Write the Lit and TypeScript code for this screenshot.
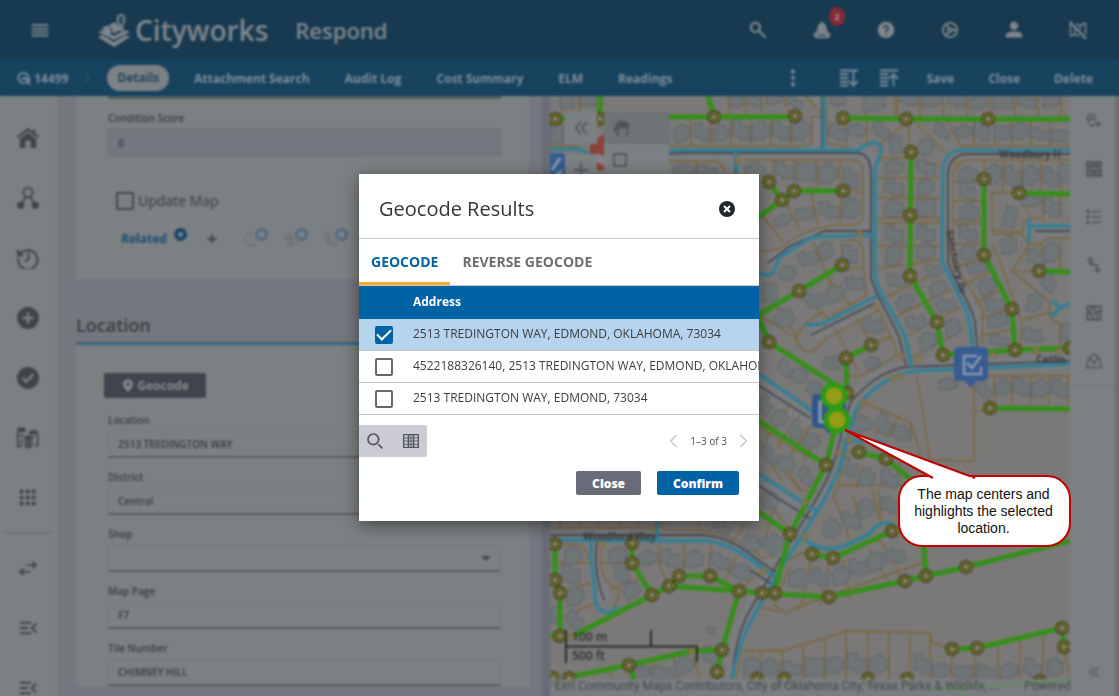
import { LitElement, html, svg, css } from "lit";
import { customElement, state } from "lit/decorators.js";

type Pt = [number, number];

const SEWERS = [
  "550,119 576,119", "600,96 600,119", "708,96 714,117", "660,117 795,117", "843,118 906,119 1070,119",
  "911,152 910,276 937,322 943,355 1015,350 1070,348", "984,179 984,255 1012,309 1015,350",
  "1019,193 1070,194", "1039,271 1070,272", "769,182 782,200 750,223", "794,191 843,191", "782,200 794,191",
  "842,265 799,291 750,320", "750,300 769,342 834,384 847,392 846,358 871,345", "834,396 837,420 826,465 790,534 774,593",
  "750,415 826,465", "750,506 790,534", "859,452 886,459 915,483 924,548 926,576",
  "892,531 833,558 812,554", "990,408 1070,409", "762,593 829,597 905,581 926,576 966,567 1070,541",
  "952,649 977,648 1062,628 1064,647", "555,544 555,580 560,593 560,636 550,635", "632,543 632,563 652,595",
  "571,637 652,595 669,586 679,576 710,576 739,591 762,593", "669,586 739,591 722,650 717,672",
  "722,650 692,651 629,665 569,677", "629,665 635,682",
];

const MANHOLES: Pt[] = [
  [555, 119], [600, 119], [714, 117], [795, 116], [843, 118], [906, 119], [988, 119], [911, 152], [910, 215],
  [910, 276], [937, 322], [943, 355], [984, 179], [984, 255], [1012, 309], [1015, 350], [1019, 193], [1039, 271],
  [769, 182], [782, 200], [794, 191], [843, 191], [842, 265], [799, 291], [769, 342], [871, 345], [846, 358],
  [847, 393], [826, 465], [790, 534], [775, 593], [762, 593], [829, 597], [905, 581], [926, 576], [966, 567],
  [859, 452], [886, 459], [892, 531], [833, 558], [812, 554], [990, 408], [952, 649], [977, 648], [1062, 628],
  [1064, 647], [555, 544], [555, 580], [560, 593], [560, 636], [632, 543], [632, 563], [652, 595], [669, 586],
  [679, 576], [710, 576], [739, 591], [722, 650], [717, 672], [629, 665], [553, 678], [569, 678], [757, 679],
  [784, 679], [868, 679], [907, 679], [1040, 681], [1070, 348],
];

const VALVES: Pt[] = [
  [738, 160], [860, 234], [875, 307], [901, 356], [918, 360], [993, 355], [1036, 351], [1059, 351], [893, 378],
  [900, 376], [863, 402], [839, 453], [849, 440], [805, 503], [805, 536], [763, 571], [652, 528], [602, 544],
  [571, 637], [692, 651], [957, 164],
];

const WATER = [
  "M550 149H580L590 155", "M650 152L683 150H858C872 141 880 139 881 151C880 158 875 163 875 172V275C877 292 890 305 905 337L912 368",
  "M824 90V150", "M735 150L737 180", "M1070 150H962C949 151 943 160 943 172L942 262L966 310C972 326 972 345 973 362",
  "M1070 364L915 371C890 374 870 390 858 406C848 425 847 455 832 485C815 520 790 550 770 588C755 612 738 640 732 680",
  "M750 368L785 392L815 413", "M750 468L817 512", "M750 558L776 578", "M873 235L812 237L780 257C776 262 777 275 766 275L750 270",
  "M804 325L822 324L877 296", "M842 441H872C881 440 886 444 892 452", "M805 540C815 548 825 550 842 547L868 535C876 526 880 520 892 524",
  "M1029 219V243M1029 226H1070", "M1052 300L1060 308L1070 303M1060 308L1051 317",
  "M550 540L708 541C735 545 750 560 774 576", "M591 540C590 570 596 584 595 600C598 614 612 616 617 606", "M657 515V540",
];

const MAINS = [
  "M650 155L683 153H858C868 154 871 162 871 175L871 278C876 296 888 312 899 337L906 365",
  "M1070 154H966C952 155 948 164 948 176V262C953 280 970 300 975 322L978 358",
  "M1070 361L905 367C880 372 866 386 852 400C842 420 840 455 824 485C808 515 788 545 766 583C750 610 736 625 732 680",
  "M735 155V180", "M822 96V150", "M768 263L790 246L825 231H870", "M811 335L875 303", "M750 380L810 418",
  "M750 480L812 520", "M750 570L772 584", "M550 535H705C738 539 750 556 776 572", "M597 540C594 568 598 585 604 600",
  "M1035 231H1070",
];

const PARCELS = [
  "M669 146H803Q812 146 812 137V117H824", "M691 120V146M711 120V146M731 120V146M751 120V146M771 120V146M791 120V146",
  "M729 96V115M746 96V115M762 96V115M783 96L790 115M806 96L824 117M562 96V150M579 96V112M590 104V96M550 146H580M592 104H605",
  "M669 161H716Q724 164 724 174M696 160V180M745 160H855Q863 162 863 172V218Q862 225 850 225H836Q800 230 780 248Q770 252 750 252",
  "M773 160V180M795 160V182M817 160V190M840 160V190M843 191L863 192M762 215L783 242M787 205L800 230M811 192L818 225M841 195V225",
  "M813 242L828 277L850 305M842 242V262M826 275L833 290M845 240H855Q863 243 863 252L866 296L831 316M843 268H863M799 294L830 320M775 305L797 336M760 316L797 338",
  "M823 312Q802 322 796 338Q800 352 812 352Q820 345 826 338L880 310L897 352Q892 362 860 376H847M835 329L858 370M857 318L872 346M872 344L893 336",
  "M826 96L828 144L850 147M846 120V145M866 96V118M867 120V146M895 96V116M897 96V116M920 96V116M943 96V116M967 96V116M991 96V116M1015 96V116M1038 96V116M1061 96V116",
  "M906 122L881 144M909 122V152M915 122L948 155M878 158H911L940 166M878 178H940M878 198H940M878 218H940M878 223H940M878 246H940M878 269L940 259",
  "M884 298L942 270M893 318L952 289M903 338L960 308M911 358L963 330M906 160V150M948 122L961 146H1070M974 120V146M995 120V146M1012 120V146M1031 120V146M1050 120V146",
  "M1070 160H966Q953 163 953 176V262L983 309L982 346M984 160V172M1003 160V192M1022 160V188M1041 160V192M1061 160V192M953 182H984M953 201H984M953 220H984M953 224H984M953 244H984M955 268L984 256M964 285L994 270M975 303L1003 288M980 318L1008 310M981 335L1013 330",
  "M989 193H1019L1029 215M992 193V230L1021 232M992 234H1021M1030 244L1012 271H1039M1000 262L1021 320L1052 312M992 245L1000 262M1012 271L1050 302M1043 193V217M1060 193V217M1060 242V271M1041 242V262",
  "M1029 219Q1019 226 1024 238Q1032 248 1042 243L1048 238H1070M1029 219Q1038 215 1046 221M1053 300Q1046 308 1052 318Q1058 326 1070 324M1022 324L1020 348M1060 324V348",
  "M974 385V461L928 460M974 411H990M955 376H1070M994 376V405M1012 376V405M1031 376V405M1049 376V405M1068 376V405M917 376L930 460L920 545",
  "M863 402L911 423L918 445L926 492M865 402Q850 420 848 440M884 410L875 435M899 415L888 438M911 423V440M838 485H905M846 455L838 485L833 498M863 465L856 490M878 490L881 520M833 495L850 540M853 495L861 530M872 490L880 520M900 462L895 490M858 452H845",
  "M750 421L790 447L826 465M765 440L790 405M777 447L800 415M790 455L812 425M803 462L820 435M750 431L800 490L818 492M765 455L782 480M785 465L800 490M750 490L770 505L790 530M760 500L750 515M774 505L765 540",
  "M788 560L800 554L829 548M800 610L812 554M820 606L830 560M850 600L843 560M892 588L869 550M905 582L880 540L850 548M790 565L774 605L785 613L803 605L922 563L925 543L895 530",
  "M750 651L785 650L847 631L930 633L932 642L952 649M782 650V680M803 645V680M825 639V680M846 632V680M868 632V680M889 633V680M910 633V680M930 633V680M952 649V680M975 650V680M998 646V680M1020 641V680M1043 636V680M1064 650L1070 675",
  "M560 515V528M579 515V528M599 515V528M619 515V528M639 515V528M550 528H648M657 520L665 530H700Q740 535 762 558L775 556M699 520V530M720 515L708 534M745 525L730 545",
  "M550 563H560M555 563H590M560 593L590 583M560 618L594 604M550 544H575Q588 546 588 560M602 545Q598 562 605 580L620 590L614 608M602 563H632M610 590L642 578M659 543Q656 570 670 583M684 543L682 573M711 543L708 573M737 555L725 580M763 570L742 587",
  "M760 607L780 612M742 651H785M742 651L736 680M652 660L660 685M673 655L680 685M694 651L700 685M610 670L612 680M560 640H550M760 651V680",
];

const BUILDINGS: [number, number, number, number, number, number?][] = [
  [682, 133, 17, 17, -12, 1], [702, 132, 15, 18, 0, 2], [721, 133, 16, 16, 0, 1], [741, 130, 17, 20, 0, 2], [761, 131, 18, 18, 0, 1], [781, 131, 17, 18, 0, 2], [801, 130, 17, 20, 0, 1],
  [737, 101, 14, 12, 0, 1], [755, 101, 12, 12, 0, 2], [774, 99, 16, 10, 0, 1], [795, 102, 16, 10, 10, 2], [567, 100, 14, 16, 0], [588, 100, 16, 12, 0], [557, 134, 12, 18, 0],
  [684, 170, 20, 12, 0, 1], [707, 171, 20, 12, 0, 2], [755, 171, 20, 16, 0, 1], [784, 170, 18, 18, 0, 2], [806, 172, 20, 17, 0], [828, 173, 18, 20, 0, 1], [851, 178, 15, 20, 0, 2],
  [783, 220, 18, 11, -20, 1], [805, 214, 18, 11, -8], [829, 210, 21, 16, 0, 2], [852, 208, 17, 20, 0, 1],
  [788, 273, 14, 16, 35, 1], [808, 258, 18, 16, -28, 2], [826, 250, 14, 18, -15, 1], [850, 254, 15, 18, 0, 2], [770, 293, 15, 18, 0], [785, 318, 18, 20, 35, 1], [815, 300, 18, 17, -28, 2], [835, 293, 18, 16, -25, 1], [855, 283, 18, 15, -20, 2],
  [838, 100, 16, 12, 15, 1], [874, 102, 22, 18, 0, 1], [908, 98, 18, 14, 0, 2], [932, 100, 20, 14, 0, 1], [957, 99, 18, 16, 0, 2], [979, 102, 18, 14, 0, 1], [1003, 101, 19, 15, 0], [1027, 101, 18, 14, 0, 2], [1051, 101, 16, 13, 0, 1],
  [838, 132, 18, 15, 5, 2], [857, 130, 16, 13, 20, 1], [881, 130, 18, 14, 25, 2], [896, 145, 12, 18, -10], [926, 147, 15, 18, 25, 1], [942, 131, 17, 13, 20, 2], [964, 131, 18, 12, 0, 1], [982, 131, 15, 20, 0, 2], [1002, 133, 16, 13, 0], [1020, 131, 16, 17, 0, 1], [1039, 134, 16, 12, 0, 2], [1059, 136, 17, 11, 0],
  [894, 167, 18, 14, 0, 1], [894, 187, 18, 17, 0, 2], [894, 208, 18, 18, 0, 1], [894, 234, 18, 18, 0, 2], [894, 255, 16, 20, 0, 1], [926, 167, 18, 15, 0, 2], [926, 187, 17, 16, 0, 1], [926, 208, 18, 17, 0], [926, 233, 18, 16, 0, 2], [926, 251, 18, 16, 0, 1],
  [896, 280, 17, 15, -15, 2], [905, 302, 18, 15, -26, 1], [916, 322, 18, 16, -26, 2], [928, 341, 17, 17, -15, 1], [934, 270, 14, 15, -26, 2], [938, 288, 18, 14, -26, 1], [946, 305, 18, 15, -26, 2], [953, 327, 14, 18, -5, 1],
  [968, 175, 19, 16, 0, 1], [967, 191, 15, 18, 0, 2], [969, 212, 19, 16, 0, 1], [968, 233, 18, 16, 0, 2], [968, 252, 15, 14, -10, 1], [977, 267, 18, 14, -26, 2], [987, 286, 17, 16, -26, 1], [995, 304, 18, 14, -20, 2], [998, 320, 20, 15, -5, 1], [999, 340, 18, 12, 0, 2],
  [994, 174, 16, 20, 0, 1], [1013, 177, 16, 22, 0, 2], [1031, 175, 16, 20, 0, 1], [1051, 177, 15, 21, 0, 2], [1065, 173, 12, 18, 0], [1032, 201, 20, 10, 0, 1], [1052, 207, 16, 19, 0, 2], [1010, 217, 12, 20, 15], [1009, 245, 15, 18, 0, 1], [1036, 257, 17, 16, 0, 2], [1052, 252, 16, 20, 0, 1], [1049, 283, 14, 16, 28, 2], [1035, 302, 14, 20, 15, 1], [1033, 335, 18, 16, -15, 2], [1066, 332, 10, 16, 0],
  [948, 384, 18, 12, 0, 1], [984, 390, 16, 13, 20, 2], [1003, 387, 16, 17, 0, 1], [1022, 387, 16, 18, 0, 2], [1041, 388, 18, 18, 0, 1], [1060, 388, 16, 18, 0, 2], [833, 363, 18, 13, 20, 1], [873, 325, 18, 18, -15, 2], [873, 363, 15, 12, -10, 1],
  [800, 375, 15, 17, 32, 1], [785, 368, 15, 14, 32, 2], [815, 388, 14, 15, 32, 1], [765, 405, 15, 17, 32, 2], [780, 418, 15, 17, 32, 1], [796, 430, 14, 17, 32, 2], [812, 441, 16, 16, 32, 1], [770, 455, 18, 15, 32, 2], [787, 464, 16, 16, 32, 1], [806, 476, 17, 15, 32, 2], [770, 500, 18, 17, 32, 1], [770, 541, 18, 14, -40, 2],
  [862, 424, 20, 16, 10, 1], [884, 424, 16, 18, 25, 2], [902, 433, 18, 15, 30, 1], [849, 467, 17, 18, 10, 2], [867, 477, 15, 18, 8, 1], [890, 478, 18, 17, 5, 2], [832, 528, 17, 18, 8, 1], [851, 520, 16, 20, -20, 2], [866, 508, 16, 18, -15, 1], [890, 505, 18, 16, 0, 2],
  [799, 578, 20, 19, 10, 1], [820, 577, 16, 18, 0, 2], [841, 575, 18, 18, -15, 1], [858, 567, 16, 18, -15, 2], [876, 561, 18, 18, -20, 1], [896, 556, 18, 16, -20, 2],
  [770, 667, 18, 16, 0, 1], [792, 668, 18, 14, 0, 2], [814, 667, 19, 18, 0], [835, 665, 18, 16, 0, 1], [857, 663, 19, 20, 0, 2], [879, 664, 18, 18, 0, 1], [923, 664, 18, 20, 0, 2], [942, 670, 18, 14, 0, 1], [964, 672, 18, 12, 0], [986, 672, 18, 16, 0, 2], [1009, 671, 18, 15, 0, 1], [1033, 668, 18, 18, 10, 2], [1055, 667, 16, 18, 0, 1],
  [573, 555, 17, 18, 0, 1], [571, 574, 18, 20, 0, 2], [575, 596, 18, 18, -15, 1], [575, 620, 18, 16, 25, 2], [618, 555, 17, 16, 0, 1], [622, 573, 15, 20, 0, 2], [632, 590, 17, 16, -25, 1], [648, 558, 18, 14, 0, 1], [670, 558, 18, 18, 0, 2], [694, 559, 18, 18, 10, 1], [720, 561, 20, 16, 10, 2], [742, 572, 20, 16, 30, 1], [722, 527, 18, 14, 25, 2], [752, 543, 18, 16, 35, 1], [774, 545, 16, 18, 35], [640, 673, 20, 14, -15, 1], [663, 673, 22, 16, -15, 2], [685, 665, 20, 16, -15, 1], [711, 655, 14, 18, 0, 2], [752, 666, 18, 18, 0, 1], [711, 630, 8, 6, 15], [555, 615, 8, 16, 0],
];

const SHAPES = [
  "M0 0H10V10H0Z",
  "M0 2H3V0H7V2H10V8H7V10H0Z",
  "M0 0H5V3H10V10H4V8H0Z",
];

const glyph: Record<string, unknown> = {
  menu: svg`<path d="M1 4H23V6.500H1zM1 9H23V11.500H1zM1 13.500H23V16H1zM1 18H23V20.500H1z"/>`,
  search: svg`<path fill-rule="evenodd" d="M8.500 1a7.500 7.500 0 1 0 4.200 13.700L21 23l2-2-8.200-8.200A7.500 7.500 0 0 0 8.500 1zm0 3a4.500 4.500 0 1 1 0 9 4.500 4.500 0 0 1 0-9z"/>`,
  bell: svg`<path d="M12 1c-1 0-2 1-2 2-3 1-4 4-4 7l-2 5h16l-2-5c0-3-1-6-4-7 0-1-1-2-2-2z"/><path d="M3 15Q0 17 1 20t5 3h12q4 0 5-3t-2-5z"/><path d="M6 19.500h12" stroke="#173a51" stroke-width="1.500"/>`,
  help: svg`<circle cx="12" cy="12" r="11"/><path d="M9 9.500a3 3 0 1 1 4.500 2.600Q12 13 12 14.500M12 16.500v2" fill="none" stroke="#173a51" stroke-width="2"/>`,
  wheel: svg`<g fill="none" stroke="currentColor" stroke-width="2.500"><circle cx="12" cy="12" r="9.500"/><circle cx="12" cy="12" r="2.500"/><path d="M14 12H21M10.500 10L7 4M10.500 14L7 20"/></g>`,
  person: svg`<circle cx="12" cy="6.500" r="5.500"/><path d="M1 22v-2q0-6 11-6t11 6v2z"/>`,
  mapoff: svg`<g fill="none" stroke="currentColor" stroke-width="2"><path d="M2 3v17l6-2 6 2M8 8v10M9 4l6 2 7-3v15M15 6v6"/><path d="M1 1L23 24" stroke-width="3"/></g>`,
  sortdown: svg`<path d="M0 2H24M0 7H11M0 12H11M0 17H11M0 22H11M18 3V21M12 16l6 6 6-6" fill="none" stroke="currentColor" stroke-width="2.400"/>`,
  sortup: svg`<path d="M0 2H24M0 7H11M0 12H11M0 17H11M0 22H11M18 23V7M12 13l6-6 6 6" fill="none" stroke="currentColor" stroke-width="2.400"/>`,
  dots: svg`<circle cx="12" cy="3.500" r="2.700"/><circle cx="12" cy="12" r="2.700"/><circle cx="12" cy="20.500" r="2.700"/>`,
  record: svg`<g fill="none" stroke="currentColor" stroke-width="3"><circle cx="11" cy="12" r="9"/><path d="M7 12l3 3 5-6M14 14l7 0v8l-6-5"/></g>`,
  home: svg`<path d="M12 1L0 10l1.500 2L12 4.300 22.500 12 24 10 20 7V3h-3v2z"/><path d="M3 13l9-7 9 7v10h-6v-8H9v8H3z"/>`,
  nodes: svg`<circle cx="4" cy="20" r="4"/><circle cx="20" cy="20" r="4"/><g fill="none" stroke="currentColor" stroke-width="2"><circle cx="12" cy="6" r="5"/><path d="M10 10.500L5 18M14 10.500L19 18"/></g>`,
  history: svg`<path d="M4 7A10.500 10.500 0 1 1 1.500 12M12.500 6v7l-4 3" fill="none" stroke="currentColor" stroke-width="2.200"/><path d="M0 2v8h8z"/>`,
  plus: svg`<circle cx="12" cy="12" r="12"/><path d="M12 6v12M6 12h12" stroke="#7b8082" stroke-width="2.600"/>`,
  check: svg`<circle cx="12" cy="12" r="12"/><path d="M6 12l4 4 8-8" fill="none" stroke="#7b8082" stroke-width="2.600"/>`,
  stack: svg`<ellipse cx="5" cy="3" rx="5" ry="2.500"/><ellipse cx="18" cy="6" rx="5" ry="2.500"/><ellipse cx="12.500" cy="11.500" rx="4.500" ry="2.500"/><path d="M1 5v16h4M5 7v5M5 14v5M22.500 8v12h-3M18 10v2" fill="none" stroke="currentColor" stroke-width="2"/><path d="M8 13v9q4.500 3 9 0v-9q-4.500 3-9 0z" opacity=".8"/>`,
  grid: svg`${[4, 12, 20].map((y) => [4, 12, 20].map((x) => svg`<rect x=${x - 3} y=${y - 3} width="5" height="5" rx="1"/>`))}`,
  swap: svg`<path d="M10 8H22M18 4l4.500 4L18 12M15 17H2M6 13l-4.500 4L6 21" fill="none" stroke="currentColor" stroke-width="2.300"/>`,
  collapse: svg`<path d="M1 5H16M1 12H12M1 19H16M23 6l-6 6 6 6" fill="none" stroke="currentColor" stroke-width="2.600"/>`,
  pinplus: svg`<g fill="none" stroke="currentColor" stroke-width="2"><path d="M13 17l-4 3C5 16 2 13 2 8c0-8 12-8 12 0v4M5 7h6M5 10h6M18 12v9M13 16.500h10"/></g>`,
  qr: svg`<g fill="none" stroke="currentColor" stroke-width="3"><path d="M2 2h8v7H2zM14 2h8v7h-8zM2 14h8v8H2zM14 14h8v8h-8zM5 6h2M17 6h2M5 18h2M17 18h2"/></g>`,
  list: svg`<path d="M8 4H22M8 12H22M8 20H22" stroke="currentColor" stroke-width="2"/><path d="M1 1h4v5H1zM1 9.500h4v5H1zM1 18h4v5H1z"/>`,
  route: svg`<g fill="none" stroke="currentColor" stroke-width="2.200"><circle cx="7" cy="5" r="3"/><path d="M7 8v4h10v9M13 18l4 4 4-4"/></g>`,
  basemap: svg`<g fill="none" stroke="currentColor" stroke-width="2.500"><path d="M2 2h20v20H2zM2 9h5l3-7M14 2q-2 6 3 8h5M2 15l5-3 4 10M11 14l5-2 2 10"/></g>`,
  mappin: svg`<g fill="none" stroke="currentColor" stroke-width="2"><path d="M7 7H4L1 22h22L20 7h-3M12 16C5 8 7 2 12 2s7 6 0 14z"/></g>`,
  dleft: svg`<path d="M12 4l-7 8 7 8M20 4l-7 8 7 8" fill="none" stroke="currentColor" stroke-width="2"/>`,
  hand: svg`<path d="M8 23v-4l-5-6 2-2 4 3-3-8 2-1 4 7-1-9h2l2 9 1-8h2l0 9 2-6 2 0-1 10-2 6" fill="none" stroke="currentColor" stroke-width="2"/>`,
  square: svg`<path d="M4 4H20V20H4z" fill="none" stroke="currentColor" stroke-width="2"/>`,
  cross: svg`<path d="M12 2V22M2 12H22" stroke="currentColor" stroke-width="2"/>`,
  add: svg`<path d="M12 3V21M3 12H21" stroke="currentColor" stroke-width="3.500"/>`,
  pin: svg`<path fill-rule="evenodd" d="M12 1C2 1 2 11 6 15l6 8 6-8c4-4 4-14-6-14zm0 5a3 3 0 1 1 0 6 3 3 0 0 1 0-6z"/>`,
  bubble: svg`<path d="M14 21A9 9 0 1 1 15 4M14 21h6" fill="none" stroke="currentColor" stroke-width="2"/>`,
  gear: svg`<g fill="none" stroke="currentColor" stroke-width="3"><circle cx="12" cy="13" r="3"/><path d="M12 5Q3 5 4 13M6 18Q12 26 19 17M12 9Q8 9 8 13"/></g>`,
  phone: svg`<path d="M3 3Q3 22 21 22V17l-5-2-3 2Q9 14 8 11l2-3-2-5z" fill="none" stroke="currentColor" stroke-width="2"/>`,
  close: svg`<circle cx="12" cy="12" r="12"/><path d="M7.500 7.500l9 9M16.500 7.500l-9 9" stroke="#fff" stroke-width="3"/>`,
  lens: svg`<circle cx="9.500" cy="9.500" r="8" fill="none" stroke="currentColor" stroke-width="2.600"/><path d="M17 17l6 6" stroke="currentColor" stroke-width="2.800"/>`,
  columns: svg`<g fill="none" stroke="currentColor"><path d="M1 2.500H23V21.500H1z" stroke-width="2"/><path d="M1 7.500H23M1 12H23M1 17H23" stroke-width="1.300"/><path d="M8 2V22M16 2V22" stroke-width="2"/><path d="M10.500 2V22M12 3V22M13.500 2V22" stroke-width="1.500" stroke-dasharray="1.500 1.500"/></g>`,
  prev: svg`<path d="M16 3L7 12l9 9" fill="none" stroke="currentColor" stroke-width="2.400"/>`,
  next: svg`<path d="M8 3l9 9-9 9" fill="none" stroke="currentColor" stroke-width="2.400"/>`,
};

const icon = (name: string, size = 18) =>
  html`<svg class="icon" viewBox="0 0 24 24" width=${size} height=${size} fill="currentColor" aria-hidden="true">${glyph[name]}</svg>`;

@customElement("street-map")
class StreetMap extends LitElement {
  static styles = css`
    :host { display: block; min-width: 0; overflow: hidden; background: #7a7977; }
    svg { display: block; width: 100%; height: 100%; }
    .road path { fill: none; stroke: #7b7c7f; stroke-width: 16; }
    .parcel path { fill: none; stroke: #7c643b; stroke-width: 1.4; }
    .building path { fill: #6f7477; stroke: #606569; stroke-width: 1; }
    .main path { fill: none; stroke: #484b50; stroke-width: 1.8; }
    .water path { fill: none; stroke: #347f95; stroke-width: 3.6; stroke-linejoin: round; }
    .sewer polyline { fill: none; stroke: #358f19; stroke-width: 5; stroke-linejoin: round; }
    .street { font: 700 10px "Open Sans", sans-serif; fill: #3a3b3e; }
    .scale { font: 600 12px "Open Sans", sans-serif; fill: #303335; }
    .credit { font: 12px Roboto, sans-serif; fill: #484c4e; }
  `;

  render() {
    return html`<svg viewBox="550 96 520 600" preserveAspectRatio="xMinYMin slice" role="img" aria-label="Map">
      <g class="road">${MAINS.map((d) => svg`<path d=${d} />`)}</g>
      <g class="parcel">${PARCELS.map((d) => svg`<path d=${d} />`)}</g>
      <g class="building">${BUILDINGS.map(([x, y, w, h, r, k]) => svg`<path d=${SHAPES[k ?? 0]} vector-effect="non-scaling-stroke"
        transform=${`translate(${x} ${y}) rotate(${r}) scale(${w / 10} ${h / 10}) translate(-5 -5)`} />`)}</g>
      <g class="main">${MAINS.map((d) => svg`<path d=${d} />`)}</g>
      <g class="water">${WATER.map((d) => svg`<path d=${d} />`)}</g>
      <g class="sewer">${SEWERS.map((p) => svg`<polyline points=${p} />`)}</g>
      <g fill="#857552" stroke="#7d6a43">${VALVES.map(([x, y]) => svg`<circle cx=${x} cy=${y} r="3.500" opacity=".8" />`)}</g>
      ${MANHOLES.map(([x, y]) => svg`<g transform=${`translate(${x} ${y})`}>
        <circle r="7" fill="#34362a" /><circle r="4.500" fill="none" stroke="#7f7b22" stroke-width="3.200" stroke-dasharray="2.500 1" /><circle r="2.200" fill="#8c8c84" /></g>`)}
      <text class="street" x="999" y="158">Woodbury H</text>
      <text class="street" x="583" y="540">Woodford Way</text>
      <text class="street" x="1036" y="363">Catlin</text>
      <text class="street" transform="translate(946 231) rotate(78)">Sanctuary Dr</text>

      <path d="M604 134L590 144V170H604z" fill="#8b4138" /><path d="M597 153l7 3v10l-7-4z" fill="#8a8484" />
      <path d="M550 153h12q4 0 4 4v30h-16z" fill="#355d8f" /><path d="M552 170l8-12M553 178l9-7" stroke="#8a99ab" stroke-width="3" />

      <path d="M817 394h24q5 0 5 5v24q0 5-5 5h-7l-5 6-5-6h-7q-5 0-5-5v-24q0-5 5-5z" fill="#31568b" />
      <path d="M827 402h-7v20h12" fill="none" stroke="#8f9bab" stroke-width="3" />
      <g fill="#959c16" stroke="#2f9a15" stroke-width="5"><circle cx="834" cy="396" r="11" /><circle cx="837" cy="420" r="11" /></g>
      <path d="M959 347h24q5 0 5 5v24q0 5-5 5h-6l-6 7-6-7h-6q-5 0-5-5v-24q0-5 5-5z" fill="#375c92" />
      <path d="M977 356h-13v18h17v-7M967 363l5 5 9-12" fill="none" stroke="#8c98a8" stroke-width="2.500" />

      <path d="M566 630V663M566 646.500H697V662M651 630V646" fill="none" stroke="#2a2c2e" stroke-width="2" />
      <text class="scale" x="572" y="641">100 m</text>
      <text class="scale" x="572" y="660">500 ft</text>
      <rect x="550" y="679" width="520" height="17" fill="#7b8082" opacity=".8" />
      <path d="M930 690L1070 680M945 684L965 694" stroke="#668a5f" stroke-width="2" />
      <text class="credit" x="555" y="690">Esri Community Maps Contributors, City of Oklahoma City, Texas Parks &amp; Wildlife, ...</text>
      <text class="credit" x="1024" y="690">Powered</text>
    </svg>`;
  }
}

@customElement("app-root")
class AppRoot extends LitElement {
  @state() private selected = 0;

  static styles = css`
    :host { display: block; position: relative; height: 100vh; overflow: hidden; background: #75777e; font-family: "Open Sans", sans-serif; color: #3b4043; }
    * { box-sizing: border-box; }
    button, input, select { font-family: inherit; color: inherit; margin: 0; }
    button { border: 0; background: none; padding: 0; cursor: pointer; }
    a { color: inherit; text-decoration: none; }
    h1, h2, h3, p { margin: 0; }
    .icon { display: block; flex: none; }

    .page { height: 100%; display: flex; flex-direction: column; }
    .top { height: 59px; flex: none; display: flex; align-items: center; background: #173a51; color: #7f868b; padding: 0 32px 0 31px; }
    .brand { display: flex; align-items: center; gap: 4px; margin-left: 48px; font-size: 28px; font-weight: 600; }
    .product { font-size: 22px; font-weight: 600; margin-left: 27px; }
    .actions { margin-left: auto; display: flex; gap: 46px; }
    .actions button { position: relative; }
    .alert { position: absolute; left: 16px; top: -14px; width: 16px; height: 19px; border-radius: 50%; background: #842a35; font-size: 9px; font-weight: 700; line-height: 19px; text-align: center; color: #9c8d93; }

    .bar { height: 37px; flex: none; display: flex; align-items: center; background: #17435f; color: #7b8b97; padding: 1px 26px 0 17px; font-size: 12px; font-weight: 700; }
    .bar a, .bar button { font: inherit; white-space: nowrap; }
    .record { display: flex; align-items: center; gap: 3px; }
    .crumb { margin: 0 15px 0 14px; color: #45657a; }
    .links { display: flex; align-items: center; gap: 35px; }
    .links .current { background: #7c8185; color: #27485d; border-radius: 13px; padding: 0 10px; line-height: 26px; margin-right: -10px; }
    .commands { margin-left: auto; display: flex; align-items: center; gap: 34px; }
    .sorts { display: flex; gap: 22px; margin: 0 -6px 0 4px; }

    .body { flex: 1; min-height: 0; display: grid; grid-template-columns: 57px 485fr 8px 520fr 45px 4px; }
    .side { background: #7b8082; overflow: hidden; display: flex; flex-direction: column; align-items: flex-start; color: #414548; padding-top: 12px; }
    .side a { height: 60px; width: 56px; flex: none; display: grid; place-items: center; }
    .side hr { width: 48px; margin: 4px; border: 0; border-top: 2px solid #6f7375; flex: none; }
    .form { overflow: hidden; padding: 0 13px 0 19px; }
    .card { background: #7b8082; padding: 0 28px 0 32px; }
    .first { height: 183px; }
    .rule { border: 0; border-top: 3px solid #565c60; margin: 0 0 12px; }
    .field { display: flex; flex-direction: column; gap: 3px; margin-bottom: 12px; }
    .field label { font-size: 10px; font-weight: 600; line-height: 15px; }
    .field input, .field select { width: 100%; height: 27px; border: 1px solid #727779; border-bottom: 2px solid #595e61; border-radius: 2px; background: transparent; padding: 0 9px; font-size: 10px; font-weight: 600; appearance: none; }
    .field .locked { background: #75777e; border: 1px solid #6b6e74; }
    .drop { display: grid; align-items: center; }
    .drop > * { grid-area: 1 / 1; }
    .drop::after { content: ""; grid-area: 1 / 1; justify-self: end; margin-right: 10px; border: 5px solid transparent; border-top-color: #464b4e; border-bottom: 0; }
    .tick { display: flex; align-items: center; gap: 4px; margin: 35px 0 0 8px; font-size: 14px; line-height: 20px; }
    .box { appearance: none; width: 18px; height: 18px; border: 2px solid #66696b; border-radius: 2px; display: grid; place-items: center; background: transparent; }
    .tick .box { border-color: #44494c; }
    .related { display: flex; align-items: center; margin: 16px 0 0 13px; font-size: 12px; font-weight: 700; line-height: 24px; color: #1f4f71; }
    .count { width: 13px; height: 13px; border: 4px solid #17456a; border-radius: 50%; margin: 0 19px 10px 7px; }
    .related .icon { color: #3d4245; }
    .minis { display: flex; gap: 15px; margin-left: 25px; }
    .mini { display: flex; }
    .mini .icon { color: #6c7072; }
    .mini .count { border-width: 3px; border-color: #4f6c80; margin: -3px 0 0 -4px; }
    .section { font-size: 18px; font-weight: 600; line-height: 26px; padding: 33px 0 4px; border-bottom: 3px solid #3e647c; }
    .second { padding-top: 28px; }
    .geocode { display: flex; align-items: center; justify-content: center; gap: 2px; width: 102px; height: 25px; margin: 0 0 15px -4px; border-radius: 2px; background: #41444d; color: #84888c; font-size: 12px; font-weight: 700; }
    .split { background: #696c76; }
    .mapwrap { display: grid; min-width: 0; min-height: 0; position: relative; }
    .tools { position: absolute; left: 15px; top: 16px; display: flex; gap: 7px; color: #4a4e50; }
    .stack { display: grid; gap: 10px; align-content: start; }
    .tools button { display: grid; place-items: center; width: 32px; height: 32px; background: #7b8082; }
    .panel { background: #7b8082; width: 65px; }
    .panel button:first-child { width: 100%; padding-right: 31px; background: #6e7375; }
    .rail { background: #7b8082; color: #4b5053; display: flex; flex-direction: column; align-items: center; padding: 1px 0 0 3px; }
    .rail button { height: 48px; width: 32px; display: grid; place-items: center; }
    .rail hr { align-self: stretch; border: 0; border-top: 1px solid #70757a; margin: 0 0 auto; }
    .edge { background: #696d76; }

    .shade { position: absolute; inset: 0; backdrop-filter: blur(1px); display: grid; place-items: center; padding: 0 1px 1px 0; }
    .callout { position: absolute; right: 48px; top: 475px; width: 173px; height: 72px; border: 2px solid #c00000; border-radius: 24px; background: #fff; color: #111; font: 14px/17px "Liberation Sans", sans-serif; text-align: center; padding: 9px 8px 9px 6px; }
    .tail { position: absolute; left: -58px; top: -51px; }
    .modal { width: 400px; background: #fff; color: #32373a; box-shadow: 0 4px 16px rgba(0, 0, 0, .45); }
    .title { display: flex; align-items: center; justify-content: space-between; padding: 0 24px 0 20px; border-bottom: 1px solid #c8c9ca; line-height: 64px; height: 65px; }
    .title h2 { font-size: 20px; font-weight: 400; padding-top: 6px; }
    .title button { color: #20272b; padding-top: 6px; }
    .tabs { display: flex; border-bottom: 1px solid #c8c9ca; height: 47px; }
    .tabs button { padding: 2px 12px 0; font-size: 14px; font-weight: 700; color: #6c6f72; border-bottom: 3px solid transparent; }
    .tabs .on { color: #0063a5; border-color: #fbab26; }
    .scroller { overflow: hidden; }
    table { border-collapse: collapse; width: 100%; font-size: 12px; table-layout: fixed; }
    th, td { height: 32px; padding: 0 0 2px; text-align: left; white-space: nowrap; border-bottom: 1px solid #c4c5c6; }
    th { background: #0063a5; color: #fff; font-weight: 700; border-color: #0063a5; padding: 0 0 2px; }
    td { color: #3a3e41; }
    .pick { width: 54px; padding: 2px 0 0 16px; }
    .chosen td { background: #b6d4ed; }
    .box:checked { background: #0063a5; border-color: #0063a5; }
    .box:checked::after { content: ""; width: 12px; height: 6px; border: 2px solid #fff; border-top: 0; border-right: 0; transform: translateY(-2px) rotate(-45deg); }
    .foot { display: flex; align-items: center; justify-content: space-between; margin-top: 10px; padding-right: 8px; }
    .utils { display: flex; background: #cacbd5; border-radius: 0 2px 2px 0; height: 32px; padding: 0 8px; gap: 20px; color: #55585d; }
    .pager { display: flex; align-items: center; gap: 8px; font-size: 10px; color: #4c5053; }
    .pager button { color: #c9cacb; }
    .buttons { display: flex; justify-content: flex-end; gap: 16px; padding: 14px 20px 26px; }
    .buttons button { height: 24px; padding: 1px 16px 0; border-radius: 2px; background: #696c78; color: #fff; font-size: 12px; font-weight: 800; }
    .buttons .primary { background: #0063a5; }
  `;

  private field(id: string, label: string, value: string) {
    return html`<div class="field"><label for=${id}>${label}</label><input id=${id} .value=${value} /></div>`;
  }

  render() {
    const addresses = [
      "2513 TREDINGTON WAY, EDMOND, OKLAHOMA, 73034",
      "4522188326140, 2513 TREDINGTON WAY, EDMOND, OKLAHOMA, 73034",
      "2513 TREDINGTON WAY, EDMOND, 73034",
    ];
    return html`
      <div class="page">
        <header class="top">
          <button aria-label="Menu">${icon("menu")}</button>
          <div class="brand">
            <svg class="icon" width="34" height="34" viewBox="0 0 34 34" aria-hidden="true">
              <g fill="currentColor"><path d="M1 19l5-2 11 6 11-6 5 2-16 8zM1 24l4-2 12 7 12-7 4 2-16 10z" /><path d="M5 15l6-3 4 8-4 1zM12 12l6-3 6 7-7 5z" /><path d="M20 14l8 1-4 4z" /></g>
              <path d="M24 14c-5-6-4-12 0-12s5 6 0 12z" fill="#173a51" stroke="currentColor" stroke-width="2" /><circle cx="24" cy="6" r="1" fill="currentColor" />
            </svg>
            <span>Cityworks</span>
          </div>
          <h1 class="product">Respond</h1>
          <div class="actions">
            <button aria-label="Search">${icon("search")}</button>
            <button aria-label="Notifications">${icon("bell")}<span class="alert">2</span></button>
            <button aria-label="Help">${icon("help")}</button>
            <button aria-label="Settings">${icon("wheel")}</button>
            <button aria-label="Account">${icon("person")}</button>
            <button aria-label="Hide map">${icon("mapoff")}</button>
          </div>
        </header>
        <nav class="bar">
          <a class="record" href="#">${icon("record", 14)}14499</a>
          <span class="crumb">${icon("next", 10)}</span>
          <div class="links">
            <a class="current" href="#">Details</a><a href="#">Attachment Search</a><a href="#">Audit Log</a><a href="#">Cost Summary</a><a href="#">ELM</a><a href="#">Readings</a>
          </div>
          <div class="commands">
            <button aria-label="More">${icon("dots")}</button>
            <div class="sorts"><button aria-label="Expand all">${icon("sortdown")}</button><button aria-label="Collapse all">${icon("sortup")}</button></div>
            <button>Save</button><button>Close</button><button>Delete</button>
          </div>
        </nav>
        <main class="body">
          <nav class="side">
            ${["home", "nodes", "history", "plus", "check", "stack"].map((n) => html`<a href="#" aria-label=${n}>${icon(n, 22)}</a>`)}
            <a href="#" aria-label="Apps">${icon("grid")}</a>
            <hr />
            <a href="#" aria-label="Swap">${icon("swap")}</a>
            <a href="#" aria-label="Collapse">${icon("collapse")}</a>
            <a href="#" aria-label="Collapse">${icon("collapse")}</a>
          </nav>
          <section class="form">
            <div class="card first">
              <hr class="rule" />
              <div class="field"><label for="score">Condition Score</label><input class="locked" id="score" readonly value="0" /></div>
              <div class="tick"><input class="box" type="checkbox" id="update" /><label for="update">Update Map</label></div>
              <div class="related">Related<span class="count"></span>${icon("add", 12)}
                <div class="minis">${["bubble", "gear", "phone"].map((n) => html`<span class="mini">${icon(n, 16)}<span class="count"></span></span>`)}</div>
              </div>
            </div>
            <h3 class="section">Location</h3>
            <div class="card second">
              <button class="geocode">${icon("pin", 14)}Geocode</button>
              ${this.field("location", "Location", "2513 TREDINGTON WAY")}
              ${this.field("district", "District", "Central")}
              <div class="field"><label for="shop">Shop</label><div class="drop"><select id="shop"><option></option></select></div></div>
              ${this.field("page", "Map Page", "F7")}
              ${this.field("tile", "Tile Number", "CHIMNEY HILL")}
            </div>
          </section>
          <div class="split"></div>
          <div class="mapwrap">
            <street-map></street-map>
            <div class="tools">
              <div class="stack"><button aria-label="Collapse tools">${icon("dleft")}</button><button aria-label="Zoom in">${icon("cross")}</button></div>
              <div class="panel"><button aria-label="Pan">${icon("hand")}</button><button aria-label="Select">${icon("square")}</button></div>
            </div>
          </div>
          <div class="rail">
            ${["pinplus", "qr", "list", "route", "basemap", "mappin"].map((n) => html`<button aria-label=${n}>${icon(n, 16)}</button>`)}
            <hr />
            <button aria-label="Expand">${icon("dleft", 14)}</button>
          </div>
          <div class="edge"></div>
        </main>
      </div>

      <div class="shade">
        <div class="callout">
          <svg class="tail" width="140" height="54" viewBox="0 0 140 54" aria-hidden="true"><path d="M91 52L3 4L133 52" fill="#fff" stroke="#c00000" stroke-width="2" /><path d="M94 52.500H130" stroke="#fff" stroke-width="3" /></svg>
          The map centers and highlights the selected location.
        </div>
        <section class="modal" role="dialog" aria-labelledby="dialog-title">
          <header class="title"><h2 id="dialog-title">Geocode Results</h2><button aria-label="Dismiss">${icon("close", 16)}</button></header>
          <div class="tabs"><button class="on">GEOCODE</button><button>REVERSE GEOCODE</button></div>
          <div class="scroller">
            <table>
              <thead><tr><th class="pick"></th><th>Address</th></tr></thead>
              <tbody>
                ${addresses.map((a, i) => html`<tr class=${i === this.selected ? "chosen" : ""}>
                  <td class="pick"><input class="box" type="checkbox" id=${"row" + i} .checked=${i === this.selected} @change=${() => (this.selected = i)} aria-label=${a} /></td>
                  <td><label for=${"row" + i}>${a}</label></td></tr>`)}
              </tbody>
            </table>
          </div>
          <div class="foot">
            <div class="utils"><button aria-label="Search rows">${icon("lens", 16)}</button><button aria-label="Columns">${icon("columns", 16)}</button></div>
            <div class="pager"><button aria-label="Previous">${icon("prev", 16)}</button><span>1–3 of 3</span><button aria-label="Next">${icon("next", 16)}</button></div>
          </div>
          <div class="buttons"><button>Close</button><button class="primary">Confirm</button></div>
        </section>
      </div>
    `;
  }
}
